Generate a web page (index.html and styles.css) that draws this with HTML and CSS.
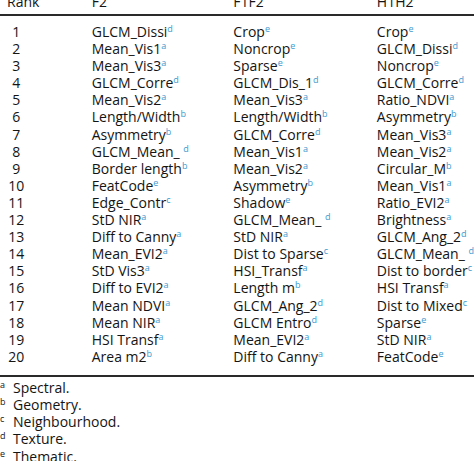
FILE: index.html
```html
<!DOCTYPE html>
<html lang="en">
<head>
    <meta charset="UTF-8">
    <title>Feature ranking</title>
    <link rel="stylesheet" href="styles.css">
</head>
<body>
    <div class="sheet">
        <table class="rank-table">
            <thead>
                <tr>
                    <th class="col-rank">Rank</th>
                    <th class="col-f2">F2</th>
                    <th class="col-f1f2">F1F2</th>
                    <th>H1H2</th>
                </tr>
            </thead>
            <tbody>
                <tr class="first"><td>1</td><td>GLCM_Dissi<sup>d</sup></td><td>Crop<sup>e</sup></td><td>Crop<sup>e</sup></td></tr>
                <tr><td>2</td><td>Mean_Vis1<sup>a</sup></td><td>Noncrop<sup>e</sup></td><td>GLCM_Dissi<sup>d</sup></td></tr>
                <tr><td>3</td><td>Mean_Vis3<sup>a</sup></td><td>Sparse<sup>e</sup></td><td>Noncrop<sup>e</sup></td></tr>
                <tr><td>4</td><td>GLCM_Corre<sup>d</sup></td><td>GLCM_Dis_1<sup>d</sup></td><td>GLCM_Corre<sup>d</sup></td></tr>
                <tr><td>5</td><td>Mean_Vis2<sup>a</sup></td><td>Mean_Vis3<sup>a</sup></td><td>Ratio_NDVI<sup>a</sup></td></tr>
                <tr><td>6</td><td>Length/Width<sup>b</sup></td><td>Length/Width<sup>b</sup></td><td>Asymmetry<sup>b</sup></td></tr>
                <tr><td>7</td><td>Asymmetry<sup>b</sup></td><td>GLCM_Corre<sup>d</sup></td><td>Mean_Vis3<sup>a</sup></td></tr>
                <tr><td>8</td><td>GLCM_Mean_ <sup>d</sup></td><td>Mean_Vis1<sup>a</sup></td><td>Mean_Vis2<sup>a</sup></td></tr>
                <tr><td>9</td><td>Border length<sup>b</sup></td><td>Mean_Vis2<sup>a</sup></td><td>Circular_M<sup>b</sup></td></tr>
                <tr><td>10</td><td>FeatCode<sup>e</sup></td><td>Asymmetry<sup>b</sup></td><td>Mean_Vis1<sup>a</sup></td></tr>
                <tr><td>11</td><td>Edge_Contr<sup>c</sup></td><td>Shadow<sup>e</sup></td><td>Ratio_EVI2<sup>a</sup></td></tr>
                <tr><td>12</td><td>StD NIR<sup>a</sup></td><td>GLCM_Mean_ <sup>d</sup></td><td>Brightness<sup>a</sup></td></tr>
                <tr><td>13</td><td>Diff to Canny<sup>a</sup></td><td>StD NIR<sup>a</sup></td><td>GLCM_Ang_2<sup>d</sup></td></tr>
                <tr><td>14</td><td>Mean_EVI2<sup>a</sup></td><td>Dist to Sparse<sup>c</sup></td><td>GLCM_Mean_ <sup>d</sup></td></tr>
                <tr><td>15</td><td>StD Vis3<sup>a</sup></td><td>HSI_Transf<sup>a</sup></td><td>Dist to border<sup>c</sup></td></tr>
                <tr><td>16</td><td>Diff to EVI2<sup>a</sup></td><td>Length m<sup>b</sup></td><td>HSI Transf<sup>a</sup></td></tr>
                <tr><td>17</td><td>Mean NDVI<sup>a</sup></td><td>GLCM_Ang_2<sup>d</sup></td><td>Dist to Mixed<sup>c</sup></td></tr>
                <tr><td>18</td><td>Mean NIR<sup>a</sup></td><td>GLCM Entro<sup>d</sup></td><td>Sparse<sup>e</sup></td></tr>
                <tr><td>19</td><td>HSI Transf<sup>a</sup></td><td>Mean_EVI2<sup>a</sup></td><td>StD NIR<sup>a</sup></td></tr>
                <tr class="last"><td>20</td><td>Area m2<sup>b</sup></td><td>Diff to Canny<sup>a</sup></td><td>FeatCode<sup>e</sup></td></tr>
            </tbody>
        </table>

        <!-- footnotes -->
        <ul class="notes">
            <li><sup>a</sup>Spectral.</li>
            <li><sup>b</sup>Geometry.</li>
            <li><sup>c</sup>Neighbourhood.</li>
            <li><sup>d</sup>Texture.</li>
            <li><sup>e</sup>Thematic.</li>
        </ul>
    </div>
</body>
</html>
```

FILE: styles.css
```css
* {
    margin: 0;
    padding: 0;
    box-sizing: border-box;
}

body {
    font-family: 'Open Sans', sans-serif;
    font-size: 14px;
    color: #141414;
    background: white;
}

.sheet {
    margin-top: -9px;
}

.rank-table {
    width: 100%;
    border-collapse: collapse;
}

.rank-table th {
    font-weight: normal;
    text-align: left;
    line-height: 22px;
    padding-bottom: 1px;
    border-bottom: 2px solid #2a2a2a;
}

.rank-table th.col-rank {
    width: 93px;
    padding-left: 7px;
}

.rank-table th.col-f2 {
    width: 145px;
}

.rank-table th.col-f1f2 {
    width: 147px;
}

.rank-table td {
    line-height: 17.1px;
    white-space: nowrap;
}

.rank-table td:first-child {
    text-align: center;
    padding-right: 59px;
}

.rank-table tr.first td {
    padding-top: 7px;
}

.rank-table tr.last td {
    padding-bottom: 10px;
    border-bottom: 2px solid #2a2a2a;
}

sup {
    font-size: 9px;
    line-height: 0;
    vertical-align: 5px;
    color: #3b9ad0;
}

.notes {
    list-style: none;
    padding-top: 2px;
}

.notes li {
    line-height: 17.2px;
}

.notes sup {
    display: inline-block;
    width: 13px;
    color: #141414;
}
```
